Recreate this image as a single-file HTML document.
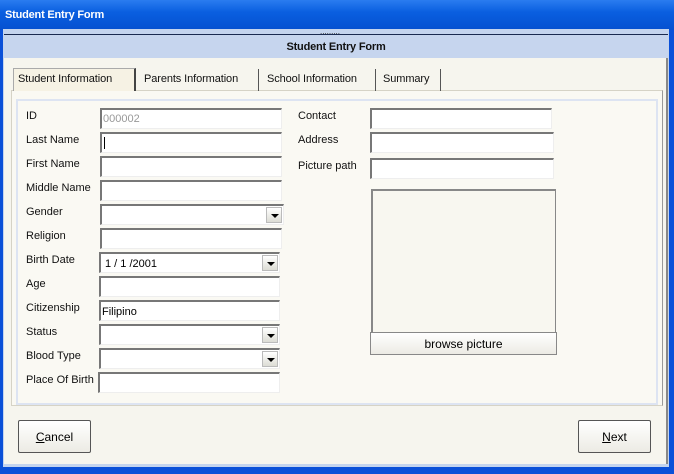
<!DOCTYPE html><html><head><style>
*{box-sizing:border-box;margin:0;padding:0}
body{width:674px;height:474px;overflow:hidden;background:#0a50d8;font-family:"Liberation Sans",sans-serif;font-size:11px;position:relative}
.a{position:absolute}
.title{left:0;top:0;width:674px;height:30px;background:linear-gradient(#2a7cf0,#0a5fe0 40%,#0550d0);color:#fff;font-weight:bold;font-size:11px;padding:9px 0 0 5px;letter-spacing:-0.2px}
.frame{left:3px;top:29px;width:666px;height:438px;background:#c4d4ee}
.head{left:4px;top:34px;width:664px;height:24px;background:#c6d5ee;border-top:1px solid #1a2a50;text-align:center;font-weight:bold;font-size:11px;padding-top:6px;color:#111;letter-spacing:-0.2px}
.body{left:4px;top:58px;width:664px;height:406px;background:#f6f5ee;border-right:2px solid #888}
.tab{top:69px;height:22px;padding:4px 4px 0;font-size:11px;border-right:1px solid #555;color:#111;letter-spacing:-0.1px}
.panel{left:11px;top:90px;width:652px;height:316px;background:#faf9f3;border:1px solid #d6d3c6;border-right:1px solid #999}
.grp{left:16px;top:99px;width:642px;height:306px;border:2px solid #dde4f2}
.l{color:#111;font-size:11px;margin-top:1px}
.i{background:#fff;border-top:2px solid #777;border-left:2px solid #777;border-right:1px solid #eee;border-bottom:1px solid #eee;height:21px;width:182px}
.dd{position:absolute;right:1px;top:1px;width:16px;height:16px;background:linear-gradient(#fff,#dcdcd4);border:1px solid #bbb}
.dd:after{content:"";position:absolute;left:4px;top:6px;border-left:4px solid transparent;border-right:4px solid transparent;border-top:4px solid #000}
.btn{background:linear-gradient(#fff,#ecebe4);border:1px solid #555;border-radius:2px;text-align:center;font-size:12px}
</style></head><body>
<div class="a title">Student Entry Form</div>
<div class="a frame"></div>
<div class="a" style="left:320px;top:30px;color:#222;font-size:8px;letter-spacing:0;line-height:4px">.........</div>
<div class="a head">Student Entry Form</div>
<div class="a body"></div>
<div class="a panel"></div>
<div class="a tab" style="left:13px;width:123px;background:#f6f2e4;top:68px;height:23px;border:1px solid #aaa;border-bottom:none;border-right:2px solid #444">Student Information</div>
<div class="a tab" style="left:140px;width:119px">Parents Information</div>
<div class="a tab" style="left:263px;width:113px">School Information</div>
<div class="a tab" style="left:379px;width:62px">Summary</div>
<div class="a grp"></div>

<div class="a l" style="left:26px;top:109px">ID</div><div class="a i" style="left:100px;top:108px;color:#999;padding:3px 0 0 1px">000002</div>
<div class="a l" style="left:26px;top:133px">Last Name</div><div class="a i" style="left:100px;top:132px"><div style="margin:3px 0 0 2px;width:1px;height:12px;background:#000"></div></div>
<div class="a l" style="left:26px;top:157px">First Name</div><div class="a i" style="left:100px;top:156px"></div>
<div class="a l" style="left:26px;top:181px">Middle Name</div><div class="a i" style="left:100px;top:180px"></div>
<div class="a l" style="left:26px;top:205px">Gender</div><div class="a i" style="left:100px;top:204px;width:184px"><div class="dd"></div></div>
<div class="a l" style="left:26px;top:229px">Religion</div><div class="a i" style="left:100px;top:228px"></div>
<div class="a l" style="left:26px;top:253px">Birth Date</div><div class="a i" style="left:99px;top:252px;width:181px;padding:4px 0 0 4px">1 / 1 /2001<div class="dd"></div></div>
<div class="a l" style="left:26px;top:277px">Age</div><div class="a i" style="left:99px;top:276px;width:181px"></div>
<div class="a l" style="left:26px;top:301px">Citizenship</div><div class="a i" style="left:99px;top:300px;width:181px;padding:4px 0 0 1px">Filipino</div>
<div class="a l" style="left:26px;top:325px">Status</div><div class="a i" style="left:99px;top:324px;width:181px"><div class="dd"></div></div>
<div class="a l" style="left:26px;top:349px">Blood Type</div><div class="a i" style="left:99px;top:348px;width:181px"><div class="dd"></div></div>
<div class="a l" style="left:26px;top:373px">Place Of Birth</div><div class="a i" style="left:98px;top:372px;width:182px"></div>

<div class="a l" style="left:298px;top:109px">Contact</div><div class="a i" style="left:370px;top:108px;width:182px"></div>
<div class="a l" style="left:298px;top:133px">Address</div><div class="a i" style="left:370px;top:132px;width:184px"></div>
<div class="a l" style="left:298px;top:159px">Picture path</div><div class="a i" style="left:370px;top:158px;width:184px"></div>
<div class="a" style="left:371px;top:189px;width:185px;height:144px;border:1px solid #888;border-width:2px 1px 1px 2px;background:#f8f7f0"></div>
<div class="a btn" style="left:370px;top:332px;width:187px;height:23px;border-color:#888;border-radius:0;padding-top:4px">browse picture</div>

<div class="a btn" style="left:18px;top:420px;width:73px;height:33px;padding-top:9px"><u>C</u>ancel</div>
<div class="a btn" style="left:578px;top:420px;width:73px;height:33px;padding-top:9px"><u>N</u>ext</div>
</body></html>
